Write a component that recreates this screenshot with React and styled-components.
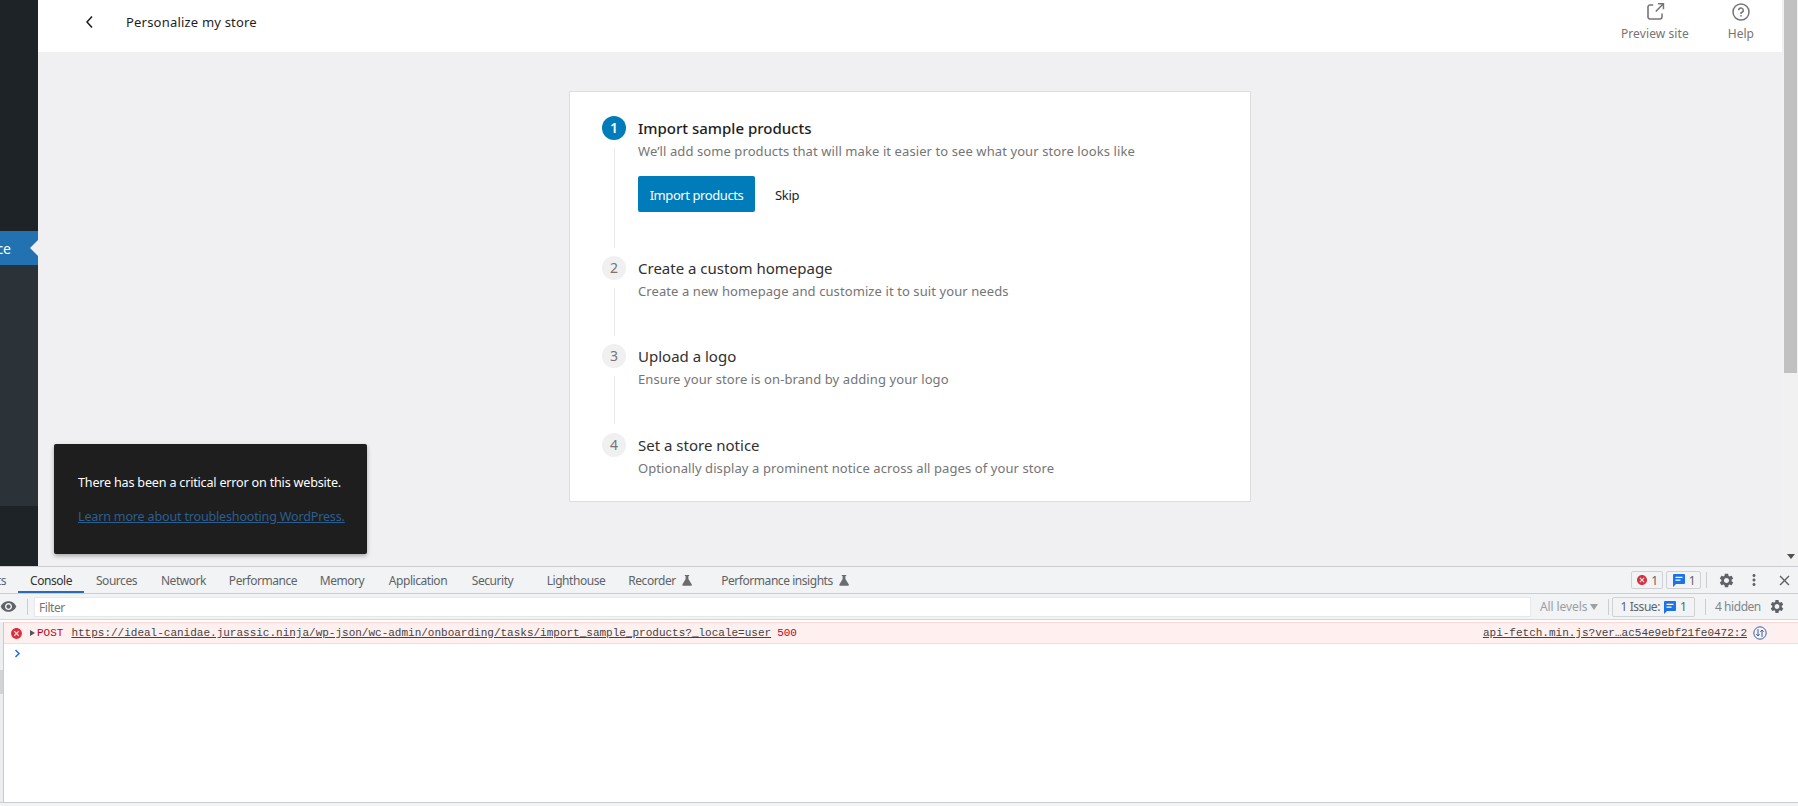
import React from 'react';
import styled, { createGlobalStyle } from 'styled-components';
import { MdSettings, MdVisibility, MdClose, MdMoreVert, MdCancel } from 'react-icons/md';

const Global = createGlobalStyle`
  html, body { margin: 0; padding: 0; background: #fff; }
  body { font-family: "Noto Sans", "Open Sans", Arial, sans-serif; overflow: hidden; }
  * { box-sizing: border-box; }
`;

const Page = styled.div`
  position: relative; width: 1798px; height: 806px; display: flex; flex-direction: column; overflow: hidden;
`;
const Top = styled.div`display: flex; height: 566px; flex: none;`;
const Sidebar = styled.aside`width: 38px; flex: none; display: flex; flex-direction: column; background: #1d2327;`;
const SideSpacer = styled.div`height: ${p => p.$h}px; flex: none;`;
const ActiveItem = styled.div`
  position: relative; height: 34px; flex: none; background: #2271b1; color: #fff; font-size: 14px;
  display: flex; align-items: center; justify-content: flex-end; padding-right: 27px; overflow: hidden;
  white-space: nowrap;
  &::after { content: ""; position: absolute; right: 0; top: 9px; border: 8px solid transparent; border-right-color: #f0f0f2; }
`;
const Submenu = styled.div`height: 241px; flex: none; background: #2c3338;`;

const Main = styled.main`flex: 1; min-width: 0; background: #f0f0f2; display: flex; flex-direction: column;`;
const Header = styled.header`height: 52px; flex: none; background: #fff; display: flex; align-items: flex-start;`;
const BackLink = styled.span`width: 88px; height: 44px; flex: none; display: flex; align-items: center; justify-content: flex-end; color: #1e1e1e; & svg { margin-right: 24px; }`;
const HeaderTitle = styled.h1`margin: 0; height: 44px; line-height: 44px; font-size: 13px; font-weight: 400; color: #1e1e1e; flex: 1; letter-spacing: .2px;`;
const HeaderTools = styled.div`display: flex; padding-right: 28px;`;
const Tool = styled.div`
  display: flex; flex-direction: column; align-items: center; color: #757575; font-size: 12px; margin-left: ${p => p.$ml}px;
  & svg { fill: #757575; display: block; }
`;
const ToolLabel = styled.span`line-height: 16px; margin-top: 2px; letter-spacing: ${p => p.$ls || 0}px;`;

const Content = styled.div`flex: 1; padding-top: 39px; display: flex; justify-content: center;`;
const Card = styled.section`width: 682px; height: 411px; background: #fff; border: 1px solid #ddd; padding: 24px 32px 0 32px;`;
const Step = styled.div`display: flex; gap: 12px;`;
const Rail = styled.div`width: 24px; flex: none; display: flex; flex-direction: column; align-items: center;`;
const Bullet = styled.div`
  width: 24px; height: 24px; border-radius: 50%; flex: none; display: flex; align-items: center; justify-content: center;
  font-size: 14px; line-height: 1; font-weight: ${p => p.$active ? 600 : 400};
  background: ${p => p.$active ? '#007cba' : '#f0f0f0'}; color: ${p => p.$active ? '#fff' : '#757575'};
`;
const Connector = styled.div`flex: 1; width: 1px; background: #e9e9e9; margin: 8px 0 ${p => p.$mb}px;`;
const StepBody = styled.div`min-width: 0; padding-bottom: ${p => p.$pb}px;`;
const StepTitle = styled.div`font-size: 15px; line-height: 24px; color: ${p => p.$active ? '#1e1e1e' : '#2f2f2f'}; font-weight: ${p => p.$active ? 500 : 400};`;
const StepText = styled.div`font-size: 13px; line-height: 22px; color: #757575; letter-spacing: .09px;`;
const Actions = styled.div`display: flex; align-items: center; margin-top: 14px;`;
const Primary = styled.button`
  width: 117px; height: 36px; border: 0; border-radius: 2px; background: #007cba; color: #fff; font: inherit; font-size: 13px; padding: 1px 0 0; letter-spacing: -.42px;
`;
const Tertiary = styled.button`margin-left: 20px; border: 0; background: none; padding: 1px 0 0; font: inherit; font-size: 13px; color: #1e1e1e; letter-spacing: -.3px;`;

const Scrollbar = styled.div`width: 16px; flex: none; background: #f1f1f1; display: flex; flex-direction: column; align-items: center; justify-content: space-between; padding-left: 1px;`;
const Thumb = styled.div`width: 13px; height: 373px; background: #c1c1c1; margin-left: -1px;`;
const ScrollArrow = styled.div`width: 0; height: 0; border: 4px solid transparent; border-top: 5px solid #505050; border-bottom: 0; margin-bottom: 7px;`;

const Snackbar = styled.div`
  position: absolute; left: 54px; top: 444px; width: 313px; height: 110px; background: #1e1e1e; border-radius: 2px;
  box-shadow: 0 2px 4px rgba(0,0,0,.3); padding: 28px 0 0 24px; font-size: 12.6px; line-height: 22px; color: #fff; letter-spacing: -.2px;
`;
const SnackLink = styled.a`display: block; margin-top: 12px; color: #2b5f8f; text-decoration: underline;`;

const Devtools = styled.div`flex: 1; min-height: 0; display: flex; flex-direction: column; background: #fff; border-top: 1px solid #cbcdd1; font-size: 12px; color: #5f6368; letter-spacing: -.45px;`;
const TabBar = styled.div`height: 27px; flex: none; background: #f1f3f4; border-bottom: 1px solid #cbcdd1; display: flex; align-items: stretch;`;
const Tab = styled.div`
  position: relative; width: ${p => p.$w}px; margin-left: ${p => p.$ml || 0}px; flex: none; display: flex; align-items: center; gap: 6px; white-space: nowrap; overflow: hidden;
  color: ${p => p.$active ? '#333' : '#5f6368'};
  justify-content: ${p => p.$end ? 'flex-end' : 'center'};
  ${p => p.$end && 'padding-right: 12px;'}
  ${p => p.$active && 'box-shadow: inset 0 -2px 0 #2b6cb0;'}
`;
const Flask = () => (
  <svg width="10" height="11" viewBox="0 0 10 11" fill="#6a6d70"><path d="M2.8 0h4.4v1H6.4v3l3.4 5.6c.3.6 0 1.2-.7 1.2H1.1c-.7 0-1-.6-.7-1.2L3.6 4V1h-.8z"/></svg>
);
const ToolSpacer = styled.div`flex: 1;`;
const Badge = styled.div`
  height: ${p => p.$h || 18}px; align-self: center; flex: none; width: ${p => p.$w}px; margin-left: ${p => p.$ml || 0}px;
  border: 1px solid #cfd1d4; border-radius: 2px; display: flex; align-items: center; justify-content: center; gap: 3px; color: #5f6368; font-size: 12px;
`;
const Sep = styled.div`width: 1px; height: 16px; align-self: center; flex: none; background: #cbcdd1; margin-left: ${p => p.$ml}px;`;
const IconSlot = styled.div`
  flex: none; align-self: center; display: flex; align-items: center; justify-content: center; color: #5f6368; width: ${p => p.$w}px; margin-left: ${p => p.$ml || 0}px;
`;
const FilterBar = styled.div`height: 26px; flex: none; background: #f1f3f4; border-bottom: 1px solid #d5d7da; display: flex; align-items: center;`;
const FilterInput = styled.div`width: 1497px; height: 20px; margin-left: 6px; flex: none; background: #fff; border: 1px solid #e6e8ea; padding-left: 4px; display: flex; align-items: center; color: #757575; align-self: flex-start; margin-top: 3px;`;
const Levels = styled.div`flex: none; margin-left: 9px; width: 67px; display: flex; align-items: center; gap: 3px; color: #9aa0a6; letter-spacing: -.1px;`;
const CaretDown = styled.span`width: 0; height: 0; border: 4px solid transparent; border-top: 6px solid #9aa0a6; border-bottom: 0;`;
const HiddenCount = styled.span`margin-left: 9px; color: #80868b; white-space: nowrap; width: 54px;`;

const ConsoleArea = styled.div`flex: 1; min-height: 0; display: flex; margin-top: 2px;`;
const Gutter = styled.div`width: 4px; flex: none; background: #eceef0; border-right: 1px solid #c8cacd; display: flex; flex-direction: column; padding-top: 48px;`;
const GutterThumb = styled.div`height: 24px; width: 3px; background: #d2d3d5;`;
const ConsoleBody = styled.div`flex: 1; min-width: 0; display: flex; flex-direction: column;`;
const ErrorRow = styled.div`
  height: 22px; flex: none; background: #fff0f0; border-top: 1px solid #ffd6d6; border-bottom: 1px solid #ffd6d6;
  display: flex; align-items: center; font-family: "Liberation Mono", monospace; font-size: 11px; letter-spacing: 0; color: #c5001f; padding-left: 6px; white-space: nowrap;
`;
const Expand = styled.span`width: 0; height: 0; border: 3.5px solid transparent; border-left: 5px solid #555; border-right: 0; margin: 0 2px 0 7px;`;
const Mono = styled.a`color: #444; text-decoration: underline; margin: 0 6px 0 8px;`;
const RowSpacer = styled.div`flex: 1;`;
const SourceLink = styled.a`color: #444; text-decoration: underline; margin-right: 6px;`;
const Prompt = styled.div`height: 19px; padding-left: 10px; display: flex; align-items: center;`;
const StatusStrip = styled.div`height: 4px; flex: none; background: #f1f3f4; border-top: 1px solid #cbcdd1;`;

const Chat = ({ s = 14 }) => (
  <svg width={s} height={s} viewBox="0 0 14 14"><path fill="#1a73e8" d="M2 1h10a1 1 0 0 1 1 1v8a1 1 0 0 1-1 1H4l-3 3V2a1 1 0 0 1 1-1z"/><path fill="#fff" d="M3.5 3.8h7v1.2h-7zM3.5 6.6h5v1.2h-5z"/></svg>
);

const steps = [
  { n: 2, t: 'Create a custom homepage', d: 'Create a new homepage and customize it to suit your needs', pb: 42, mb: 8 },
  { n: 3, t: 'Upload a logo', d: 'Ensure your store is on-brand by adding your logo', pb: 43, mb: 9 },
];

export default function App() {
  return (
    <Page>
      <Global />
      <Top>
        <Sidebar>
          <SideSpacer $h={231} />
          <ActiveItem>Appearance</ActiveItem>
          <Submenu />
        </Sidebar>
        <Main>
          <Header>
            <BackLink>
              <svg width="24" height="24" viewBox="0 0 24 24" fill="currentColor"><path d="M14.6 7l-1.2-1L8 12l5.4 6 1.2-1-4.6-5z"/></svg>
            </BackLink>
            <HeaderTitle>Personalize my store</HeaderTitle>
            <HeaderTools>
              <Tool>
                <svg width="24" height="24" viewBox="0 0 24 24"><path d="M18.2 17c0 .7-.6 1.2-1.2 1.2H7c-.7 0-1.2-.6-1.2-1.2V7c0-.7.6-1.2 1.2-1.2h3.2V4.2H7C5.5 4.2 4.2 5.5 4.2 7v10c0 1.500 1.200 2.800 2.800 2.800h10c1.500 0 2.800-1.200 2.800-2.800v-3.600h-1.500V17zM14.900 3v1.500h3.700l-6.400 6.400 1.100 1.100 6.400-6.400v3.700h1.500V3h-6.300z"/></svg>
                <ToolLabel $ls={.1}>Preview site</ToolLabel>
              </Tool>
              <Tool $ml={39}>
                <svg width="24" height="24" viewBox="0 0 24 24"><path d="M12 4.750a7.250 7.250 0 100 14.500 7.250 7.250 0 000-14.500zM3.250 12a8.750 8.750 0 1117.500 0 8.750 8.750 0 01-17.500 0zM12 8.750a1.500 1.500 0 01.167 2.990c-.465.052-.917.440-.917 1.010V14h1.500v-.845A3 3 0 109 10.250h1.500a1.500 1.500 0 011.500-1.500zM11.250 15v1.500h1.500V15h-1.500z"/></svg>
                <ToolLabel>Help</ToolLabel>
              </Tool>
            </HeaderTools>
          </Header>
          <Content>
            <Card>
              <Step>
                <Rail><Bullet $active>1</Bullet><Connector $mb={8} /></Rail>
                <StepBody $pb={44}>
                  <StepTitle $active>Import sample products</StepTitle>
                  <StepText>We’ll add some products that will make it easier to see what your store looks like</StepText>
                  <Actions><Primary>Import products</Primary><Tertiary>Skip</Tertiary></Actions>
                </StepBody>
              </Step>
              {steps.map(s => (
                <Step key={s.n}>
                  <Rail><Bullet>{s.n}</Bullet><Connector $mb={s.mb} /></Rail>
                  <StepBody $pb={s.pb}><StepTitle>{s.t}</StepTitle><StepText>{s.d}</StepText></StepBody>
                </Step>
              ))}
              <Step>
                <Rail><Bullet>4</Bullet></Rail>
                <StepBody $pb={0}><StepTitle>Set a store notice</StepTitle><StepText>Optionally display a prominent notice across all pages of your store</StepText></StepBody>
              </Step>
            </Card>
          </Content>
        </Main>
        <Scrollbar><Thumb /><ScrollArrow /></Scrollbar>
      </Top>
      <Snackbar>
        There has been a critical error on this website.
        <SnackLink>Learn more about troubleshooting WordPress.</SnackLink>
      </Snackbar>
      <Devtools>
        <TabBar>
          <Tab $w={18} $end>ts</Tab>
          <Tab $w={66} $active>Console</Tab>
          <Tab $w={65}>Sources</Tab>
          <Tab $w={69}>Network</Tab>
          <Tab $w={90}>Performance</Tab>
          <Tab $w={68}>Memory</Tab>
          <Tab $w={84}>Application</Tab>
          <Tab $w={65}>Security</Tab>
          <Tab $w={82} $ml={10}>Lighthouse</Tab>
          <Tab $w={86}>Recorder <Flask /></Tab>
          <Tab $w={148} $ml={8}>Performance insights <Flask /></Tab>
          <ToolSpacer />
          <Badge $w={32}><MdCancel size={12} color="#d93040" />1</Badge>
          <Badge $w={35} $ml={3}><Chat />1</Badge>
          <Sep $ml={5} />
          <IconSlot $w={18} $ml={10}><MdSettings size={17} /></IconSlot>
          <IconSlot $w={18} $ml={10}><MdMoreVert size={18} /></IconSlot>
          <IconSlot $w={18} $ml={12}><MdClose size={17} /></IconSlot>
          <IconSlot $w={5} />
        </TabBar>
        <FilterBar>
          <IconSlot $w={17}><MdVisibility size={17} /></IconSlot>
          <Sep $ml={10} />
          <FilterInput>Filter</FilterInput>
          <Levels>All levels <CaretDown /></Levels>
          <Sep $ml={1} />
          <Badge $w={83} $h={20} $ml={3}>1 Issue: <Chat />1</Badge>
          <Sep $ml={10} />
          <HiddenCount>4 hidden</HiddenCount>
          <IconSlot $w={16}><MdSettings size={17} /></IconSlot>
        </FilterBar>
        <ConsoleArea>
          <Gutter><GutterThumb /></Gutter>
          <ConsoleBody>
            <ErrorRow>
              <MdCancel size={13} color="#d93040" />
              <Expand />
              POST
              <Mono>https://ideal-canidae.jurassic.ninja/wp-json/wc-admin/onboarding/tasks/import_sample_products?_locale=user</Mono>
              500
              <RowSpacer />
              <SourceLink>api-fetch.min.js?ver…ac54e9ebf21fe0472:2</SourceLink>
              <svg width="14" height="14" viewBox="0 0 14 14" fill="none" stroke="#2b62b5" strokeWidth="1"><circle cx="7" cy="7" r="6.2"/><path d="M5 3v7M3.300 8.200 5 10l1.700-1.800M9 11V4M7.300 5.800 9 4l1.700 1.800"/></svg>
              <IconSlot $w={31} />
            </ErrorRow>
            <Prompt>
              <svg width="7" height="9" viewBox="0 0 7 9" fill="none" stroke="#2b74d4" strokeWidth="1.600"><path d="M1.500 1 5 4.500 1.500 8"/></svg>
            </Prompt>
          </ConsoleBody>
        </ConsoleArea>
        <StatusStrip />
      </Devtools>
    </Page>
  );
}
